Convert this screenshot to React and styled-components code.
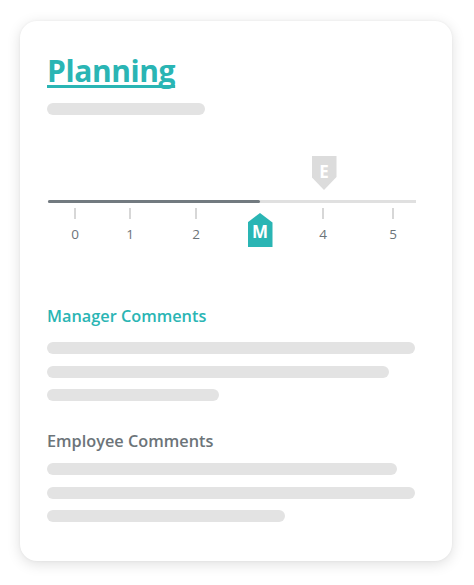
import React from 'react';
import styled, { createGlobalStyle } from 'styled-components';

const GlobalStyle = createGlobalStyle`
  html, body {
    margin: 0;
    padding: 0;
    background: #ffffff;
  }
  body {
    font-family: "Open Sans", "Noto Sans", sans-serif;
  }
`;

const TEAL = '#2ab5b4';
const SLATE = '#6c7479';

const Page = styled.div`
  width: 474px;
  height: 585px;
  padding: 21px 22px 0 20px;
  box-sizing: border-box;
`;

const Card = styled.div`
  width: 432px;
  height: 540px;
  box-sizing: border-box;
  padding: 30px 36px 0 27px;
  background: #fff;
  border-radius: 17px;
  box-shadow: 0 3px 14px rgba(0, 0, 0, 0.13), 0 0 3px rgba(0, 0, 0, 0.05);
`;

const Title = styled.h1`
  margin: 0;
  font-size: 30px;
  line-height: 40px;
  font-weight: 700;
  color: ${TEAL};
  text-decoration: underline;
  text-decoration-thickness: 3px;
  text-decoration-skip-ink: none;
  text-underline-offset: 3px;
  letter-spacing: -0.4px;
`;

const Bar = styled.div`
  width: ${p => p.$w}px;
  height: 12px;
  border-radius: 6px;
  background: #e3e3e3;
`;

const Lines = styled.div`
  display: flex;
  flex-direction: column;
  gap: 11.5px;
  margin-top: ${p => p.$top || 0}px;
`;

const Scale = styled.div`
  position: relative;
  width: 368px;
  height: 92px;
  margin-top: 41px;
  margin-left: 1px;
`;

const Track = styled.div`
  position: absolute;
  left: 0;
  right: 0;
  top: 44px;
  height: 3px;
  background: #e0e0e0;
  display: flex;
`;

const Filled = styled.div`
  height: 100%;
  background: #727a80;
  border-radius: 2px;
`;

const Tick = styled.div`
  position: absolute;
  top: 52px;
  width: 20px;
  margin-left: -10px;
  display: flex;
  flex-direction: column;
  align-items: center;
  gap: 7px;
`;

const TickLine = styled.div`
  width: 2px;
  height: 11px;
  background: #d7d7d7;
`;

const TickLabel = styled.span`
  font-size: 13.5px;
  line-height: 16px;
  color: ${SLATE};
`;

const Marker = styled.div`
  position: absolute;
  width: 25px;
  height: 34px;
  margin-left: -12.5px;
  display: flex;
  align-items: ${p => (p.$down ? 'flex-start' : 'flex-end')};
  justify-content: center;
  padding: ${p => (p.$down ? '3px 0 0' : '0 0 2px')};
  box-sizing: border-box;
  background: ${p => p.$color};
  clip-path: ${p =>
    p.$down
      ? 'polygon(0 0, 100% 0, 100% 62%, 50% 100%, 0 62%)'
      : 'polygon(50% 0, 100% 28%, 100% 100%, 0 100%, 0 28%)'};
  color: #fff;
  font-weight: 700;
  font-size: 17px;
  line-height: 26px;
`;

const Heading = styled.h2`
  margin: ${p => p.$top}px 0 0;
  font-size: 16.3px;
  line-height: 22px;
  font-weight: 600;
  color: ${p => p.$color};
`;

const ticks = [
  { label: '0', x: 27 },
  { label: '1', x: 82 },
  { label: '2', x: 148 },
  { label: '4', x: 275 },
  { label: '5', x: 345 },
];

export default function App() {
  return (
    <>
      <GlobalStyle />
      <Page>
        <Card>
          <Title>Planning</Title>
          <Lines $top={12}>
            <Bar $w={158} />
          </Lines>

          <Scale>
            <Track>
              <Filled style={{ width: 212 }} />
            </Track>
            <Marker $down $color="#dcdcdc" style={{ left: 276, top: 0 }}>E</Marker>
            {ticks.map(t => (
              <Tick key={t.label} style={{ left: t.x }}>
                <TickLine />
                <TickLabel>{t.label}</TickLabel>
              </Tick>
            ))}
            <Marker $color={TEAL} style={{ left: 212, top: 57 }}>M</Marker>
          </Scale>

          <Heading $top={57} $color={TEAL}>Manager Comments</Heading>
          <Lines $top={15}>
            <Bar $w={368} />
            <Bar $w={342} />
            <Bar $w={172} />
          </Lines>

          <Heading $top={29} $color={SLATE}>Employee Comments</Heading>
          <Lines $top={11}>
            <Bar $w={350} />
            <Bar $w={368} />
            <Bar $w={238} />
          </Lines>
        </Card>
      </Page>
    </>
  );
}
